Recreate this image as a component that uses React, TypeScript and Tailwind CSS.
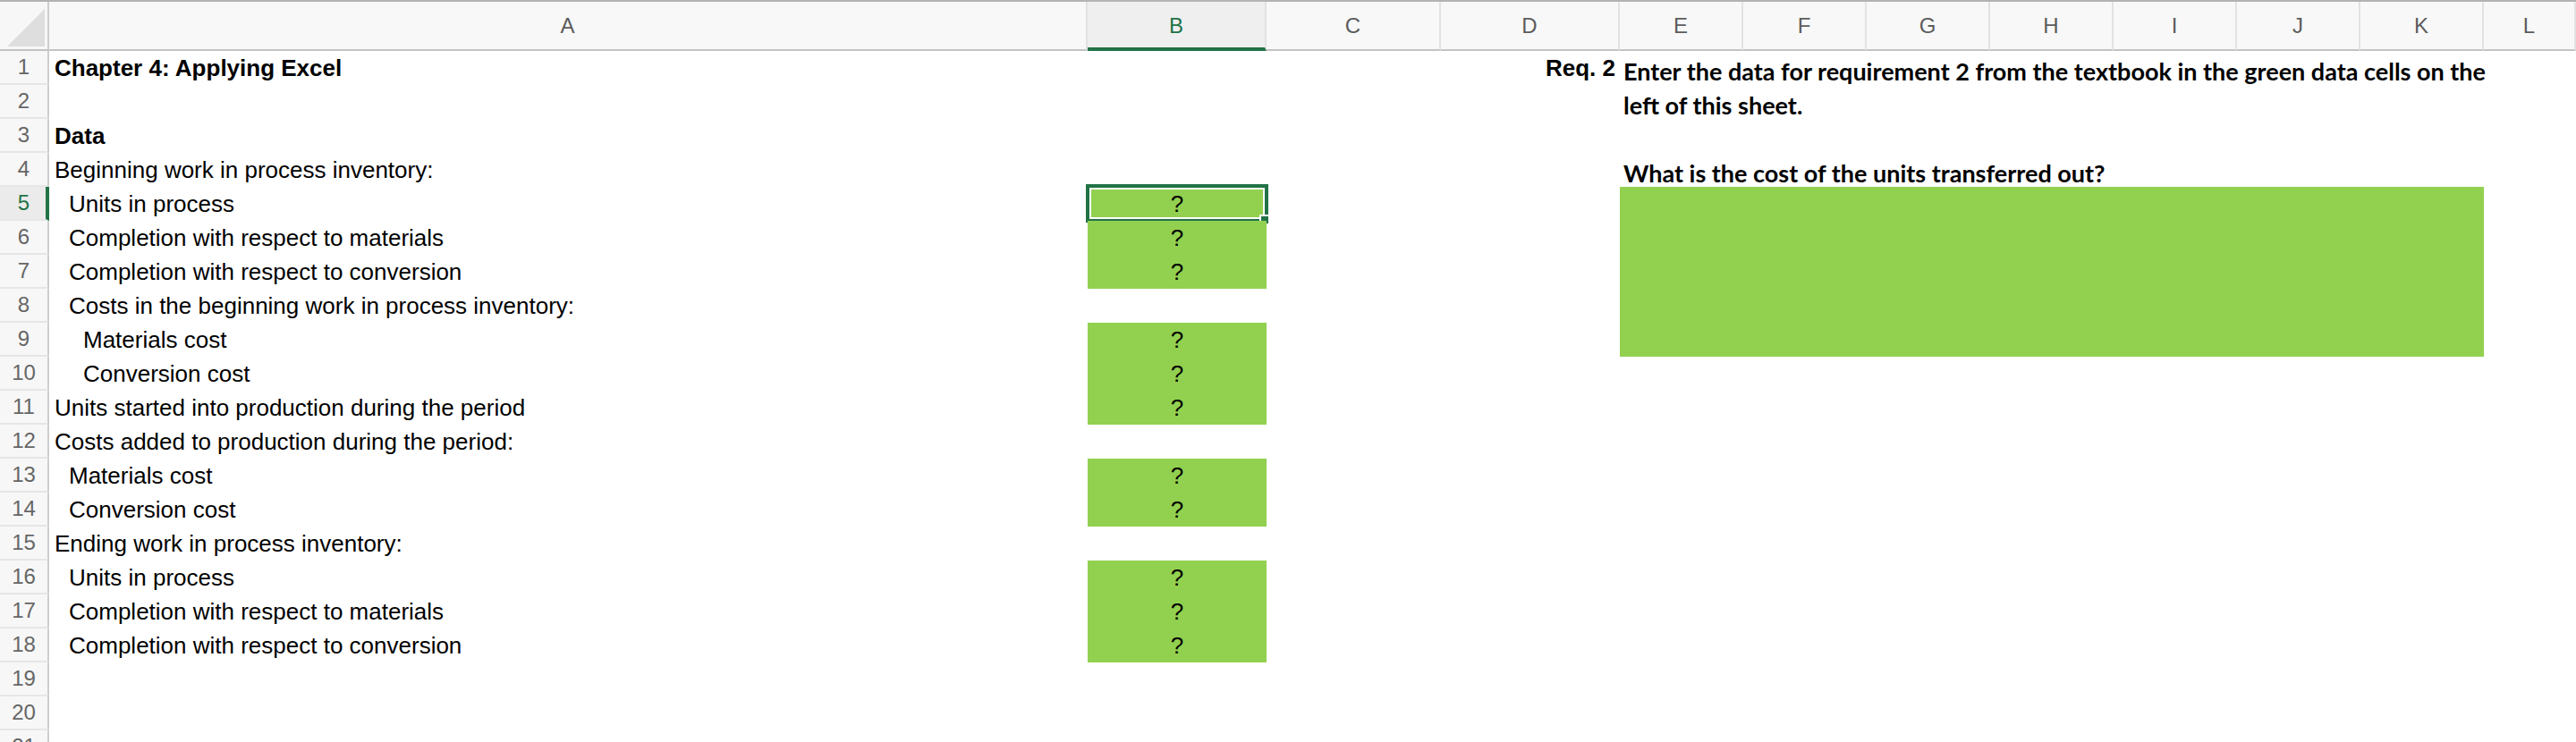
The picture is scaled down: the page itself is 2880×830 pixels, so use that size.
import React from "react";

const GRID =
  "grid grid-cols-[55px_1161px_200px_195px_200px_138px_138px_138px_138px_138px_138px_138px_1fr]";

type R = {
  a?: string;
  ind?: 0 | 1 | 2;
  bold?: boolean;
  q?: boolean;
  d?: string;
  e?: string;
  box?: boolean;
};

const rows: R[] = [
  {
    a: "Chapter 4: Applying Excel",
    bold: true,
    d: "Req. 2",
    e: "Enter the data for requirement 2 from the textbook in the green data cells on the",
  },
  { e: "left of this sheet." },
  { a: "Data", bold: true },
  { a: "Beginning work in process inventory:", e: "What is the cost of the units transferred out?" },
  { a: "Units in process", ind: 1, q: true, box: true },
  { a: "Completion with respect to materials", ind: 1, q: true, box: true },
  { a: "Completion with respect to conversion", ind: 1, q: true, box: true },
  { a: "Costs in the beginning work in process inventory:", ind: 1, box: true },
  { a: "Materials cost", ind: 2, q: true, box: true },
  { a: "Conversion cost", ind: 2, q: true },
  { a: "Units started into production during the period", q: true },
  { a: "Costs added to production during the period:" },
  { a: "Materials cost", ind: 1, q: true },
  { a: "Conversion cost", ind: 1, q: true },
  { a: "Ending work in process inventory:" },
  { a: "Units in process", ind: 1, q: true },
  { a: "Completion with respect to materials", ind: 1, q: true },
  { a: "Completion with respect to conversion", ind: 1, q: true },
  {},
  {},
  {},
];

const indentCls: Record<number, string> = {
  0: "pl-[6px]",
  1: "pl-[22px]",
  2: "pl-[38px]",
};

const letters = ["A", "B", "C", "D", "E", "F", "G", "H", "I", "J", "K", "L"];

const arial = "font-['Liberation_Sans',Arial,sans-serif]";
const hdrFont = "font-['Liberation_Sans',Arial,sans-serif]";
const calibri = "font-['Lato','Liberation_Sans',sans-serif]";

function HeaderRow() {
  return (
    <div className={`${GRID} h-[57px] border-t-2 border-[#b3b3b3]`}>
      <div className="relative bg-[#f7f7f7] border-r-2 border-r-[#cdcdcd] border-b-2 border-b-[#c3c3c3]">
        <div className="absolute left-[8px] top-[8px] w-[42px] h-[42px] bg-[#dedede] [clip-path:polygon(100%_0,100%_100%,0_100%)]" />
      </div>
      {letters.map((l) => {
        const sel = l === "B";
        return (
          <div
            key={l}
            className={`flex items-center justify-center border-r-2 border-r-[#e2e2e2] text-[24px] ${hdrFont} ${
              sel
                ? "bg-[#efefef] text-[#217346] border-b-4 border-b-[#217346] pt-[2px]"
                : "bg-[#f8f8f8] text-[#5c5c5c] border-b-2 border-b-[#c3c3c3]"
            }`}
          >
            {l}
          </div>
        );
      })}
    </div>
  );
}

function Row({ r, n }: { r: R; n: number }) {
  const sel = n === 5;
  return (
    <div className={`${GRID} h-[38px]`}>
      <div
        className={`flex items-center justify-center text-[24px] ${hdrFont} border-b-2 border-b-[#e6e6e6] ${
          sel
            ? "bg-[#ebebeb] text-[#217346] border-r-4 border-r-[#217346] pl-[2px]"
            : "bg-[#f7f7f7] text-[#666666] border-r-2 border-r-[#cdcdcd]"
        }`}
      >
        {n}
      </div>
      <div
        className={`flex items-center whitespace-nowrap text-[26px] leading-none text-black ${arial} ${
          indentCls[r.ind ?? 0]
        } ${r.bold ? "font-bold" : ""}`}
      >
        {r.a}
      </div>
      <div
        className={`relative flex items-center justify-center text-[26px] leading-none text-black ${arial} ${
          r.q ? "bg-[#92d050]" : ""
        }`}
      >
        {r.q ? "?" : ""}
        {sel && (
          <>
            <div className="absolute -top-[3px] -left-[2px] -right-[2px] -bottom-[2px] border-4 border-[#217346]">
              <div className="absolute inset-0 border-2 border-white" />
            </div>
            <div className="absolute -right-[4px] -bottom-[5px] w-[12px] h-[12px] bg-[#217346] border-2 border-white" />
          </>
        )}
      </div>
      <div />
      <div
        className={`flex items-center justify-end pr-[5px] whitespace-nowrap text-[26px] leading-none font-bold text-black ${arial}`}
      >
        {r.d}
      </div>
      <div
        className={`col-span-7 flex items-center pl-[4px] pt-[6px] whitespace-nowrap text-[27px] leading-none font-bold text-black ${calibri} ${
          r.box ? "bg-[#92d050]" : ""
        }`}
      >
        {r.e}
      </div>
      <div />
    </div>
  );
}

export default function App() {
  return (
    <div className="w-[2880px] h-[830px] overflow-hidden bg-white">
      <HeaderRow />
      {rows.map((r, i) => (
        <Row key={i} r={r} n={i + 1} />
      ))}
    </div>
  );
}
